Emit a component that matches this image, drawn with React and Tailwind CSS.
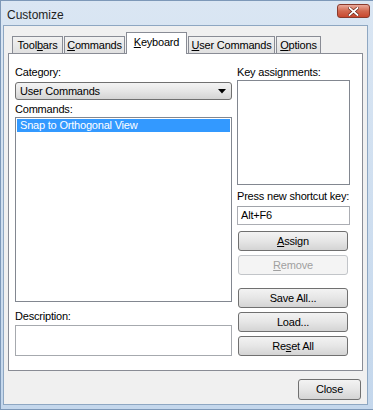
import React from 'react';

const font = { fontFamily: '"Liberation Sans", Arial, sans-serif' };

function Btn({ children, disabled = false, className = '' }) {
  return (
    <div
      className={`flex items-center justify-center h-[20px] rounded-[3px] border text-[11px] tracking-[-0.2px] ${
        disabled
          ? 'border-[#c2c5c9] bg-[#f4f4f4] text-[#a0a0a0]'
          : 'border-[#707070] bg-gradient-to-b from-[#f3f3f3] via-[#e6e6e6] to-[#d4d4d4] text-black'
      } ${className}`}
    >
      {children}
    </div>
  );
}

function Tab({ label, selected = false, w }) {
  return (
    <div
      className={`flex items-center justify-center border border-b-0 border-[#898c95] text-[11px] tracking-[-0.2px] ${w} ${
        selected
          ? 'h-[22px] bg-white -mb-px z-10 relative pb-[2px]'
          : 'h-[17px] bg-gradient-to-b from-[#f2f2f2] to-[#e0e0e0]'
      }`}
    >
      {label}
    </div>
  );
}

export default function App() {
  return (
    <div
      className="w-[373px] h-[410px] flex flex-col bg-gradient-to-b from-[#dae6f3] to-[#c4d7ec] border border-[#7d98b8] border-r-0 text-black overflow-hidden"
      style={font}
    >
      {/* title bar */}
      <div className="h-[24px] flex items-start justify-between pl-[6px] pr-[3px] pt-[3px] shrink-0">
        <span className="text-[12px] text-[#1e1e1e] mt-[2px]">Customize</span>
        <div className="w-[33px] h-[14px] rounded-[3px] border border-[#8a3a2c] bg-gradient-to-b from-[#e9a99b] via-[#d2684f] to-[#c8472e] flex items-center justify-center">
          <svg width="11" height="9" viewBox="0 0 11 9">
            <path d="M1.5 1 L9.5 8 M9.5 1 L1.5 8" stroke="#5a1a10" strokeWidth="3" strokeLinecap="square" />
            <path d="M1.5 1 L9.5 8 M9.5 1 L1.5 8" stroke="#fff" strokeWidth="1.8" strokeLinecap="square" />
          </svg>
        </div>
      </div>

      {/* client area */}
      <div className="flex-1 ml-[2px] mr-[5px] mb-[4px] bg-[#f0f0f0] border border-[#8ea7c2] flex flex-col px-[4px] pt-[5px]">
        {/* tabs */}
        <div className="flex items-end gap-[1px] h-[22px] pl-[4px]">
          <Tab w="w-[51px]" label={<span>Tool<span className="underline">b</span>ars</span>} />
          <Tab w="w-[61px]" label={<span><span className="underline">C</span>ommands</span>} />
          <Tab w="w-[61px]" selected label={<span><span className="underline">K</span>eyboard</span>} />
          <Tab w="w-[87px]" label={<span><span className="underline">U</span>ser Commands</span>} />
          <Tab w="w-[45px]" label={<span><span className="underline">O</span>ptions</span>} />
        </div>

        {/* panel */}
        <div className="h-[318px] bg-white border border-[#898c95] flex gap-[5px] pl-[6px] pt-[11px] text-[11px] tracking-[-0.2px]">
          {/* left column */}
          <div className="w-[217px] flex flex-col">
            <div className="h-[14px] leading-[14px]">Category:</div>
            <div className="mt-[3px] h-[18px] rounded-[3px] border border-[#707070] bg-gradient-to-b from-[#f3f3f3] via-[#e6e6e6] to-[#d4d4d4] flex items-center justify-between pl-[4px] pr-[5px]">
              <span>User Commands</span>
              <svg width="8" height="5" viewBox="0 0 8 5">
                <path d="M0 0 H8 L4 4.5 Z" fill="#000" />
              </svg>
            </div>
            <div className="mt-[2px] h-[14px] leading-[14px]">Commands:</div>
            <div className="mt-[1px] h-[185px] border border-[#828790] p-[1px]">
              <div className="h-[13px] bg-[#3399ff] text-white pl-[3px] leading-[13px]">Snap to Orthogonal View</div>
            </div>
            <div className="mt-[7px] h-[14px] leading-[14px]">Description:</div>
            <div className="mt-[2px] h-[31px] border border-[#a6a9ae]" />
          </div>

          {/* right column */}
          <div className="w-[113px] flex flex-col">
            <div className="h-[14px] leading-[14px]">Key assignments:</div>
            <div className="mt-[1px] h-[105px] border border-[#828790]" />
            <div className="mt-[4px] h-[14px] leading-[14px]">Press new shortcut key:</div>
            <div className="mt-[3px] h-[19px] border border-[#abadb3] border-t-[#a0a3a9] pl-[3px] flex items-center">Alt+F6</div>
            <div className="flex flex-col gap-[4px] mt-[6px] pl-[1px] pr-[2px]">
              <Btn><span><span className="underline">A</span>ssign</span></Btn>
              <Btn disabled><span><span className="underline">R</span>emove</span></Btn>
            </div>
            <div className="flex flex-col gap-[4px] mt-[13px] pl-[1px] pr-[2px]">
              <Btn>Save All...</Btn>
              <Btn>Load...</Btn>
              <Btn><span>Re<span className="underline">s</span>et All</span></Btn>
            </div>
          </div>
        </div>

        {/* footer */}
        <div className="flex justify-end mt-[8px] pr-[2px]">
          <Btn className="w-[63px] h-[21px]">Close</Btn>
        </div>
      </div>
    </div>
  );
}
